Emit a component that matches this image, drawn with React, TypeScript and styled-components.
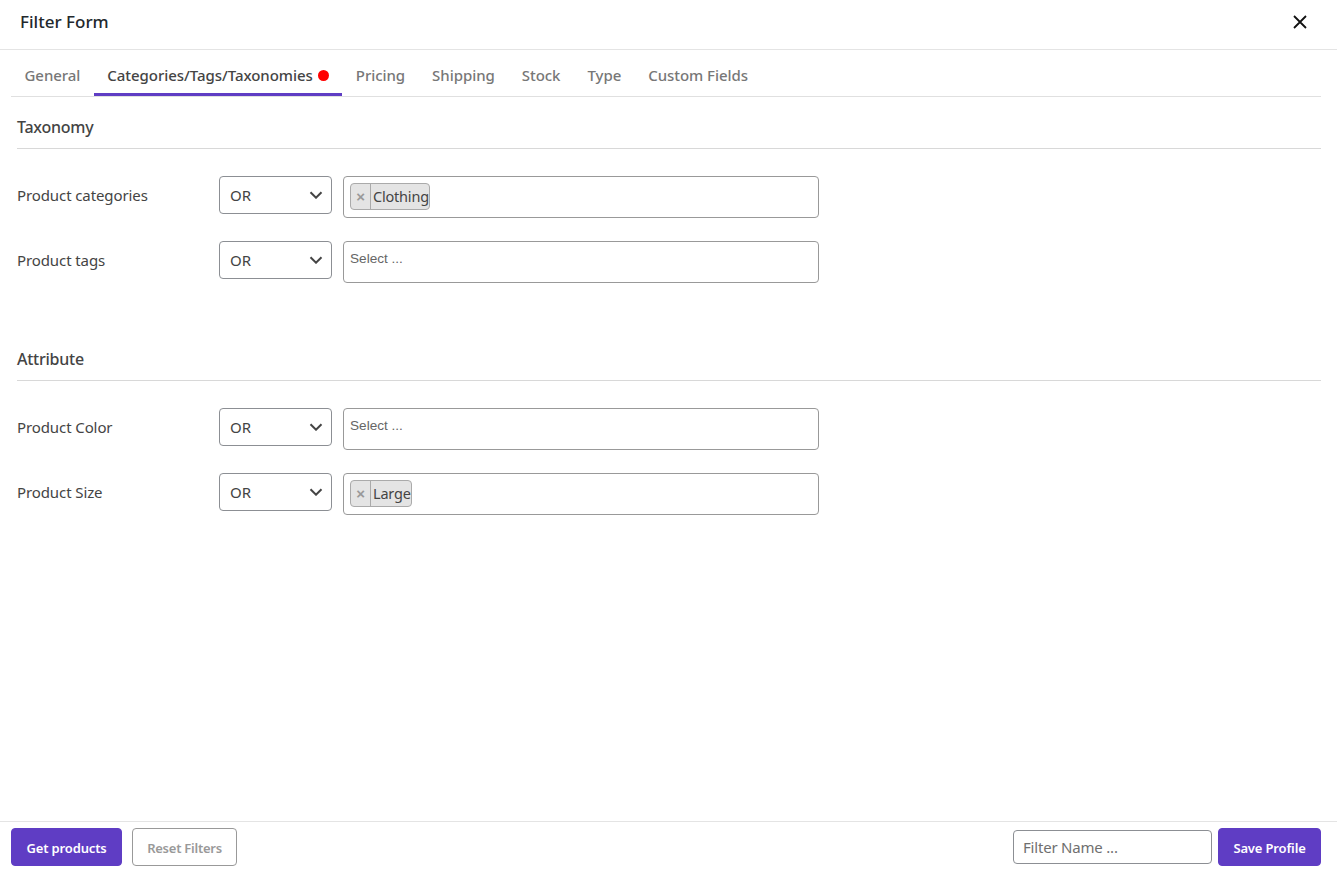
import styled, { createGlobalStyle } from "styled-components";

const GlobalStyle = createGlobalStyle`
    html, body {
        margin: 0;
        padding: 0;
        background: #fff;
    }
    body {
        font-family: "Noto Sans", "Open Sans", "Liberation Sans", sans-serif;
        color: #444;
    }
`;

const Page = styled.div`
    width: 1337px;
    height: 870px;
    display: flex;
    flex-direction: column;
    overflow: hidden;
`;

const Header = styled.div`
    flex: none;
    border-bottom: 1px solid #e4e4e4;
    padding: 0 28px 6px 20px;
    height: 43px;
    display: flex;
    align-items: center;
    justify-content: space-between;
`;

const Title = styled.div`
    font-size: 17px;
    font-weight: 500;
    color: #23282d;
`;

const CloseBtn = styled.button`
    border: 0;
    padding: 0;
    background: none;
    width: 18px;
    height: 18px;
    display: flex;
    align-items: center;
    justify-content: center;
`;

const Tabs = styled.div`
    flex: none;
    height: 46px;
    margin: 0 16px 0 11px;
    border-bottom: 1px solid #e0e0e0;
    display: flex;
`;

const Tab = styled.div<{ $active?: boolean }>`
    height: 46px;
    box-sizing: border-box;
    padding: 6px 13.5px 0;
    display: flex;
    align-items: center;
    gap: 5px;
    font-size: 15px;
    font-weight: 500;
    letter-spacing: -0.05px;
    color: ${(p) => (p.$active ? "#444" : "#777")};
    border-bottom: 3px solid ${(p) => (p.$active ? "#5f3dc4" : "transparent")};
`;

const Dot = styled.span`
    width: 11px;
    height: 11px;
    margin-top: 1px;
    border-radius: 50%;
    background: #f00;
`;

const Body = styled.div`
    flex: 1;
    padding: 0 16px 0 17px;
`;

const Section = styled.div<{ $first?: boolean }>`
    margin-top: ${(p) => (p.$first ? "19px" : "65px")};
`;

const SectionTitle = styled.div`
    font-size: 16px;
    line-height: 22px;
    font-weight: 500;
    letter-spacing: -0.25px;
    color: #444;
    padding-bottom: 10px;
    border-bottom: 1px solid #d8d8d8;
`;

const Rows = styled.div`
    margin-top: 27px;
    display: flex;
    flex-direction: column;
    gap: 23px;
`;

const Row = styled.div`
    display: flex;
    align-items: flex-start;
    height: 42px;
`;

const Label = styled.div`
    width: 202px;
    font-size: 15px;
    line-height: 38px;
    letter-spacing: -0.1px;
    color: #444;
`;

const SelectBox = styled.div`
    width: 113px;
    height: 38px;
    box-sizing: border-box;
    border: 1px solid #8c8f94;
    border-radius: 4px;
    padding: 0 8px 0 10px;
    display: flex;
    align-items: center;
    justify-content: space-between;
    font-size: 15px;
    color: #444;
`;

const MultiBox = styled.div`
    width: 476px;
    height: 42px;
    margin-left: 11px;
    box-sizing: border-box;
    border: 1px solid #999;
    border-radius: 4px;
    padding: 6px;
    display: flex;
    align-items: flex-start;
`;

const Placeholder = styled.span`
    font-family: "Liberation Sans", Arial, sans-serif;
    font-size: 13.6px;
    line-height: 22px;
    color: #666;
`;

const Chip = styled.div`
    height: 27px;
    box-sizing: border-box;
    display: flex;
    align-items: stretch;
    background: #e4e4e4;
    border: 1px solid #aaa;
    border-radius: 4px;
    font-size: 14.5px;
    letter-spacing: -0.2px;
    color: #444;
`;

const ChipRemove = styled.span`
    width: 19px;
    border-right: 1px solid #aaa;
    display: flex;
    align-items: center;
    justify-content: center;
    font-family: "Liberation Sans", Arial, sans-serif;
    font-size: 15px;
    font-weight: 700;
    color: #999;
`;

const ChipLabel = styled.span`
    padding-left: 2px;
    line-height: 25px;
`;

const Footer = styled.div`
    flex: none;
    height: 49px;
    border-top: 1px solid #e4e4e4;
    padding: 6px 16px 0 11px;
    box-sizing: border-box;
    display: flex;
    align-items: flex-start;
    justify-content: space-between;
`;

const FooterGroup = styled.div<{ $gap: number }>`
    display: flex;
    align-items: center;
    gap: ${(p) => p.$gap}px;
`;

const Button = styled.button<{ $w: number; $outline?: boolean }>`
    width: ${(p) => p.$w}px;
    height: 38px;
    padding: 1px 0 0;
    box-sizing: border-box;
    border-radius: 4px;
    font-family: inherit;
    font-size: 13px;
    font-weight: 600;
    letter-spacing: ${(p) => (p.$outline ? "-0.25px" : "-0.15px")};
    color: ${(p) => (p.$outline ? "#999" : "#fff")};
    background: ${(p) => (p.$outline ? "#fff" : "#5f3dc4")};
    border: 1px solid ${(p) => (p.$outline ? "#999" : "#5f3dc4")};
`;

const NameInput = styled.input`
    width: 199px;
    height: 34px;
    box-sizing: border-box;
    border: 1px solid #8c8f94;
    border-radius: 4px;
    padding: 0 9px;
    font-family: inherit;
    font-size: 15px;
    letter-spacing: -0.2px;
    outline: none;

    &::placeholder {
        color: #6f6f6f;
        opacity: 1;
    }
`;

const sections = [
    {
        title: "Taxonomy",
        rows: [
            { label: "Product categories", chip: "Clothing" },
            { label: "Product tags" },
        ],
    },
    {
        title: "Attribute",
        rows: [
            { label: "Product Color" },
            { label: "Product Size", chip: "Large" },
        ],
    },
];

const tabs = ["General", "Categories/Tags/Taxonomies", "Pricing", "Shipping", "Stock", "Type", "Custom Fields"];

function App() {
    return (
        <Page>
            <GlobalStyle />
            <Header>
                <Title>Filter Form</Title>
                <CloseBtn aria-label="close">
                    <svg width="16" height="16" viewBox="0 0 16 16" fill="none" stroke="#111" strokeWidth="1.8">
                        <path d="M2 2L14 14M14 2L2 14" />
                    </svg>
                </CloseBtn>
            </Header>
            <Tabs>
                {tabs.map((tab, idx) => (
                    <Tab key={tab} $active={idx === 1}>
                        {tab}
                        {idx === 1 ? <Dot /> : null}
                    </Tab>
                ))}
            </Tabs>
            <Body>
                {sections.map((section, idx) => (
                    <Section key={section.title} $first={idx === 0}>
                        <SectionTitle>{section.title}</SectionTitle>
                        <Rows>
                            {section.rows.map((row) => (
                                <Row key={row.label}>
                                    <Label>{row.label}</Label>
                                    <SelectBox>
                                        OR
                                        <svg width="14" height="8" viewBox="0 0 14 8" fill="none" stroke="#444" strokeWidth="2">
                                            <path d="M1.5 1.2L7 6.7L12.5 1.2" />
                                        </svg>
                                    </SelectBox>
                                    <MultiBox>
                                        {row.chip ? (
                                            <Chip>
                                                <ChipRemove>×</ChipRemove>
                                                <ChipLabel>{row.chip}</ChipLabel>
                                            </Chip>
                                        ) : (
                                            <Placeholder>Select ...</Placeholder>
                                        )}
                                    </MultiBox>
                                </Row>
                            ))}
                        </Rows>
                    </Section>
                ))}
            </Body>
            <Footer>
                <FooterGroup $gap={10}>
                    <Button $w={111}>Get products</Button>
                    <Button $w={105} $outline>Reset Filters</Button>
                </FooterGroup>
                <FooterGroup $gap={6}>
                    <NameInput placeholder="Filter Name ..." />
                    <Button $w={103}>Save Profile</Button>
                </FooterGroup>
            </Footer>
        </Page>
    );
}

export default App;
